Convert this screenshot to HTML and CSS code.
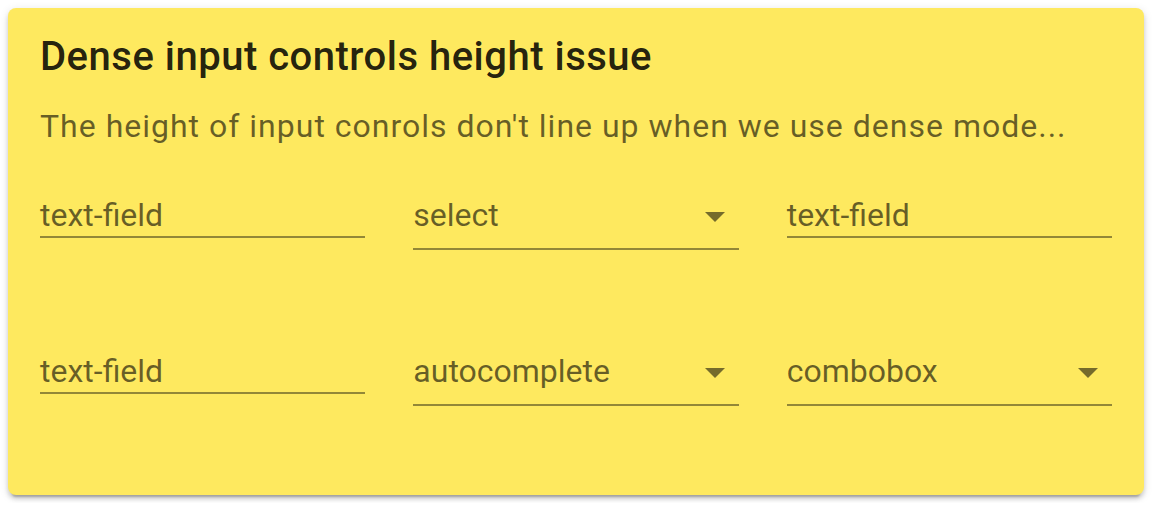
FILE: index.html
```html
<!DOCTYPE html>
<html>
<head>
<meta charset="utf-8">
<link rel="stylesheet" href="styles.css">
</head>
<body>
<div class="card">
  <div class="title">Dense input controls height issue</div>
  <div class="subtitle">The height of input conrols don't line up when we use dense mode...</div>
  <div class="grid">
    <div class="field"><div class="slot"><span class="label">text-field</span></div></div>
    <div class="field select"><div class="slot"><span class="label">select</span><svg class="arrow" viewBox="0 0 24 24"><path d="M7,10L12,15L17,10H7Z"/></svg></div></div>
    <div class="field"><div class="slot"><span class="label">text-field</span></div></div>
    <div class="field"><div class="slot"><span class="label">text-field</span></div></div>
    <div class="field select"><div class="slot"><span class="label">autocomplete</span><svg class="arrow" viewBox="0 0 24 24"><path d="M7,10L12,15L17,10H7Z"/></svg></div></div>
    <div class="field select"><div class="slot"><span class="label">combobox</span><svg class="arrow" viewBox="0 0 24 24"><path d="M7,10L12,15L17,10H7Z"/></svg></div></div>
  </div>
</div>
</body>
</html>
```
FILE: styles.css
```css
html, body {
  margin: 0;
  padding: 0;
  background: #ffffff;
}
body {
  font-family: Roboto, "Liberation Sans", sans-serif;
}
.card {
  margin: 8px;
  width: 1136px;
  box-sizing: border-box;
  padding: 25px 32px 89px 32px;
  background: #fee95f;
  border-radius: 8px;
  box-shadow: 0 6px 2px -4px rgba(0,0,0,.2), 0 4px 4px 0 rgba(0,0,0,.14), 0 2px 10px 0 rgba(0,0,0,.12);
}
.title {
  font-size: 40px;
  font-weight: 500;
  line-height: 48px;
  letter-spacing: 0.0125em;
  color: rgba(0,0,0,.87);
}
.subtitle {
  margin-top: 25px;
  font-size: 32px;
  line-height: 40px;
  letter-spacing: 0.03125em;
  color: rgba(0,0,0,.6);
}
.grid {
  margin-top: 49px;
  display: grid;
  grid-template-columns: repeat(3, 1fr);
  column-gap: 48px;
  row-gap: 101px;
  align-items: start;
}
.slot {
  display: flex;
  align-items: center;
  height: 40px;
  padding-bottom: 1px;
  border-bottom: 2px solid rgba(0,0,0,.42);
}
.select .slot {
  padding-bottom: 13px;
}
.label {
  flex: 1;
  font-size: 32px;
  line-height: 40px;
  color: rgba(0,0,0,.6);
}
.arrow {
  width: 48px;
  height: 48px;
  margin: -4px 0 -4px 0;
  position: relative;
  top: 1px;
  fill: rgba(0,0,0,.54);
  flex: none;
}
```
